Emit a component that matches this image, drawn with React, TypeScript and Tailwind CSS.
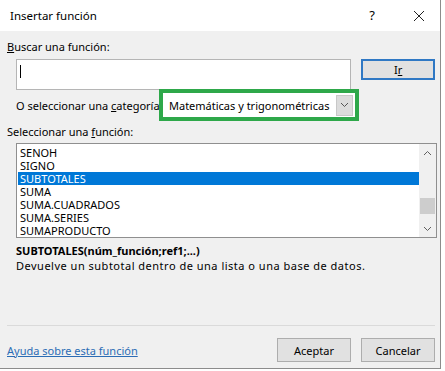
import React from 'react';

const items = ['SENOH', 'SIGNO', 'SUBTOTALES', 'SUMA', 'SUMA.CUADRADOS', 'SUMA.SERIES', 'SUMAPRODUCTO'];

const App = () => {
  return (
    <div
      className="w-[445px] h-[371px] bg-white overflow-hidden text-[11px] leading-none text-black"
      style={{ fontFamily: '"Noto Sans", "Segoe UI", sans-serif' }}
    >
      <div className="w-[441px] h-[369px] border-r border-b border-[#8c8c8c] flex flex-col">
        {/* title bar */}
        <div className="h-[31px] bg-white flex items-center pl-[10px] shrink-0">
          <span className="flex-1 text-[11.5px]">Insertar función</span>
          <span className="w-[40px] text-center text-[13px]">?</span>
          <span className="w-[48px] flex justify-center pl-[6px]">
            <svg width="12" height="12" viewBox="0 0 12 12">
              <path d="M1 1 L11 11 M11 1 L1 11" stroke="#222" strokeWidth="1" />
            </svg>
          </span>
        </div>

        <div className="flex-1 bg-[#f0f0f0] flex flex-col pl-[7px] pr-[5px]">
          <div className="mt-[9px] h-[13px] flex items-center">
            <span><u>B</u>uscar una función:</span>
          </div>

          <div className="flex mt-[6px] pl-[9px] gap-[10px]">
            <div className="w-[337px] h-[31px] bg-white border border-[#b5b5b5] flex items-start pl-[3px] pt-[5px]">
              <div className="w-px h-[13px] bg-black" />
            </div>
            <button className="w-[74px] h-[21px] bg-[#e1e1e1] border-2 border-[#2f78c4] flex items-center justify-center">
              <span>I<u>r</u></span>
            </button>
          </div>

          <div className="flex items-center mt-[-1px] pl-[9px]">
            <span className="w-[143px] whitespace-nowrap">O seleccionar una <u>c</u>ategoría</span>
            <div className="w-[200px] h-[32px] border-[4px] border-[#2ea84a] bg-white flex items-center">
              <div className="flex-1 pl-[6px] whitespace-nowrap">Matemáticas y trigonométricas</div>
              <div className="w-[17px] h-[21px] mr-[2px] bg-[#dcdcdc] border border-[#c8c8c8] flex items-center justify-center">
                <svg width="9" height="6" viewBox="0 0 9 6">
                  <path d="M1 1 L4.5 4.5 L8 1" stroke="#555" fill="none" strokeWidth="1" />
                </svg>
              </div>
            </div>
          </div>

          <div className="mt-[4px] h-[13px] flex items-center">
            <span>Seleccionar una <u>f</u>unción:</span>
          </div>

          <div className="mt-[5px] ml-[9px] w-[421px] h-[95px] bg-white border border-[#8f8f8f] flex">
            <div className="flex-1 flex flex-col pt-[2px] pl-[1px]">
              {items.map((it) => (
                <div
                  key={it}
                  className={
                    'h-[13px] leading-[13px] pl-[2px] ' +
                    (it === 'SUBTOTALES' ? 'bg-[#0078d7] text-white' : '')
                  }
                >
                  {it}
                </div>
              ))}
            </div>
            <div className="w-[17px] bg-[#f0f0f0] flex flex-col items-center">
              <div className="h-[17px] flex items-center justify-center">
                <svg width="9" height="6" viewBox="0 0 9 6">
                  <path d="M1 5 L4.5 1.5 L8 5" stroke="#606060" fill="none" strokeWidth="1" />
                </svg>
              </div>
              <div className="h-[37px]" />
              <div className="w-[15px] h-[16px] bg-[#cdcdcd]" />
              <div className="flex-1" />
              <div className="h-[17px] flex items-center justify-center">
                <svg width="9" height="6" viewBox="0 0 9 6">
                  <path d="M1 1 L4.5 4.5 L8 1" stroke="#606060" fill="none" strokeWidth="1" />
                </svg>
              </div>
            </div>
          </div>

          <div className="mt-[6px] pl-[9px] h-[13px] flex items-center font-bold">SUBTOTALES(núm_función;ref1;...)</div>
          <div className="mt-[2px] pl-[9px] h-[13px] flex items-center tracking-[0.5px]">
            Devuelve un subtotal dentro de una lista o una base de datos.
          </div>

          <div className="flex-1" />
          <div className="h-px bg-[#dadada]" />

          <div className="flex items-center h-[24px] mt-[12px] mb-[6px]">
            <a className="flex-1 text-[#2b6cb5] underline">Ayuda sobre esta función</a>
            <button className="w-[74px] h-[24px] bg-[#e1e1e1] border border-[#adadad]">Aceptar</button>
            <button className="ml-[10px] w-[74px] h-[24px] bg-[#e1e1e1] border border-[#adadad]">Cancelar</button>
          </div>
        </div>
      </div>
    </div>
  );
};

export default App;
